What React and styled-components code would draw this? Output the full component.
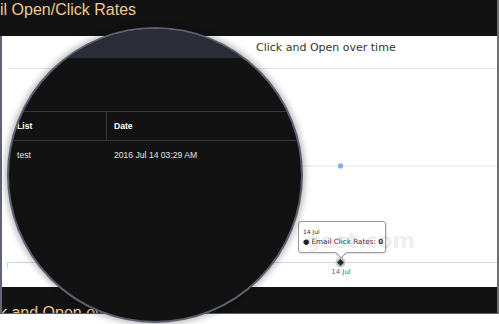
import styled, { createGlobalStyle } from 'styled-components';

const GlobalStyle = createGlobalStyle`
  html, body {
    margin: 0;
    padding: 0;
    background: #fff;
  }
  body {
    width: 499px;
    height: 324px;
    overflow: hidden;
    font-family: "Liberation Sans", Arial, sans-serif;
  }
`;

const Page = styled.div`
  position: relative;
  width: 499px;
  height: 324px;
  overflow: hidden;
`;

const Screen = styled.div`
  width: 497px;
  height: 313px;
  border-right: 2px solid #707070;
  border-bottom: 1px solid #5b6172;
  display: flex;
  flex-direction: column;
`;

const DarkBar = styled.div`
  height: ${(p) => p.$h}px;
  flex-shrink: 0;
  background: #121212;
  overflow: hidden;
`;

const BarTitle = styled.h1`
  margin: 0;
  padding-top: ${(p) => p.$top || 0}px;
  text-indent: ${(p) => p.$indent || 0}px;
  font: 400 16px/20px "Liberation Sans", Arial, sans-serif;
  color: #f3c88f;
  white-space: nowrap;
`;

const Body = styled.div`
  flex: 1;
  display: flex;
  flex-direction: column;
  border-left: 2px solid #5d6577;
`;

const Panel = styled.section`
  position: relative;
  flex: 1;
  display: flex;
  flex-direction: column;
  background: #fff;
`;

const ChartTitle = styled.div`
  height: 23px;
  box-sizing: border-box;
  padding: 5px 0 0 254px;
  font: 400 11px/14px "DejaVu Sans", sans-serif;
  color: #333;
`;

const Plot = styled.svg`
  display: block;
  flex: 1;
  width: 100%;
`;

const Tooltip = styled.div`
  position: absolute;
  left: 296px;
  top: 185px;
  width: 88px;
  height: 32px;
  box-sizing: border-box;
  padding: 5px 0 0 4px;
  background: rgba(255, 255, 255, 0.9);
  border: 1px solid #9a9a9a;
  border-radius: 3px;
  box-shadow: 1px 1px 2px rgba(0, 0, 0, 0.12);
  font-family: "DejaVu Sans", sans-serif;
  color: #333;
  white-space: nowrap;

  &::after {
    content: "";
    position: absolute;
    left: 38px;
    bottom: -5px;
    width: 7px;
    height: 7px;
    background: #fff;
    border-right: 1px solid #9a9a9a;
    border-bottom: 1px solid #9a9a9a;
    transform: rotate(45deg);
  }
`;

const TipHead = styled.div`
  font-size: 6px;
  line-height: 9px;
`;

const TipRow = styled.div`
  font-size: 7.2px;
  line-height: 11px;

  b {
    font-weight: 700;
  }
`;

const Bullet = styled.span`
  color: #222;
`;

const Watermark = styled.div`
  position: absolute;
  left: 303px;
  top: 193px;
  font: 700 22px/24px "DejaVu Sans", sans-serif;
  letter-spacing: -0.5px;
  color: rgba(0, 0, 0, 0.07);
  pointer-events: none;
`;

const Lens = styled.div`
  position: absolute;
  left: 7px;
  top: 27px;
  width: 296px;
  height: 296px;
  box-sizing: border-box;
  border-radius: 50%;
  border: 2px solid #5b6070;
  box-shadow: 0 0 6px 2px rgba(0, 0, 0, 0.28);
  background: #121212;
  overflow: hidden;
`;

const LensHeader = styled.div`
  height: 29px;
  background: #2a2d37;
`;

const LensTable = styled.div`
  margin-top: 53px;
  font-family: "Liberation Sans", Arial, sans-serif;
  font-size: 8.6px;
`;

const Row = styled.div`
  display: grid;
  grid-template-columns: 98px 1fr;
  height: 28px;
  border-top: ${(p) => (p.$head ? '1px solid #393944' : 'none')};
  border-bottom: ${(p) => (p.$head ? '1px solid #393944' : 'none')};
  color: ${(p) => (p.$head ? '#fff' : '#e4e4e4')};
  font-weight: ${(p) => (p.$head ? 700 : 400)};
`;

const Cell = styled.div`
  display: flex;
  align-items: center;
  padding-left: ${(p) => (p.$first ? 8 : 7)}px;
  border-right: ${(p) => (p.$first && p.$head ? '1px solid #393944' : 'none')};
`;

const App = () => {
  return (
    <Page>
      <GlobalStyle />
      <Screen>
        <DarkBar $h={36}>
          <BarTitle>il Open/Click Rates</BarTitle>
        </DarkBar>
        <Body>
          <Panel>
            <ChartTitle>Click and Open over time</ChartTitle>
            <Plot viewBox="0 0 495 227" preserveAspectRatio="none">
              <line x1="6" y1="9.5" x2="495" y2="9.5" stroke="#e6e6e6" />
              <line x1="6" y1="106.5" x2="495" y2="106.5" stroke="#e6e6e6" />
              <line x1="5" y1="202.5" x2="495" y2="202.5" stroke="#ccd6eb" />
              <line x1="5.5" y1="202.5" x2="5.5" y2="208" stroke="#ccd6eb" />
              <circle cx="338.5" cy="106.5" r="2.6" fill="#7cb5ec" />
              <circle cx="338.5" cy="202.5" r="5" fill="#c8c8c8" />
              <path d="M338.5 199 L342 202.5 L338.5 206 L335 202.5 Z" fill="#2b2b2b" />
              <text x="339" y="214.5" textAnchor="middle" fontFamily="DejaVu Sans, sans-serif" fontSize="7" fill="#666">
                14 Jul
              </text>
            </Plot>
            <Tooltip>
              <TipHead>14 Jul</TipHead>
              <TipRow>
                <Bullet>●</Bullet> Email Click Rates: <b>0</b>
              </TipRow>
            </Tooltip>
            <Watermark>gest.com</Watermark>
          </Panel>
          <DarkBar $h={26}>
            <BarTitle $top={16} $indent={-3}>k and Open over time</BarTitle>
          </DarkBar>
        </Body>
      </Screen>
      <Lens>
        <LensHeader />
        <LensTable>
          <Row $head>
            <Cell $first $head>List</Cell>
            <Cell>Date</Cell>
          </Row>
          <Row>
            <Cell $first>test</Cell>
            <Cell>2016 Jul 14 03:29 AM</Cell>
          </Row>
        </LensTable>
      </Lens>
    </Page>
  );
};

export default App;
